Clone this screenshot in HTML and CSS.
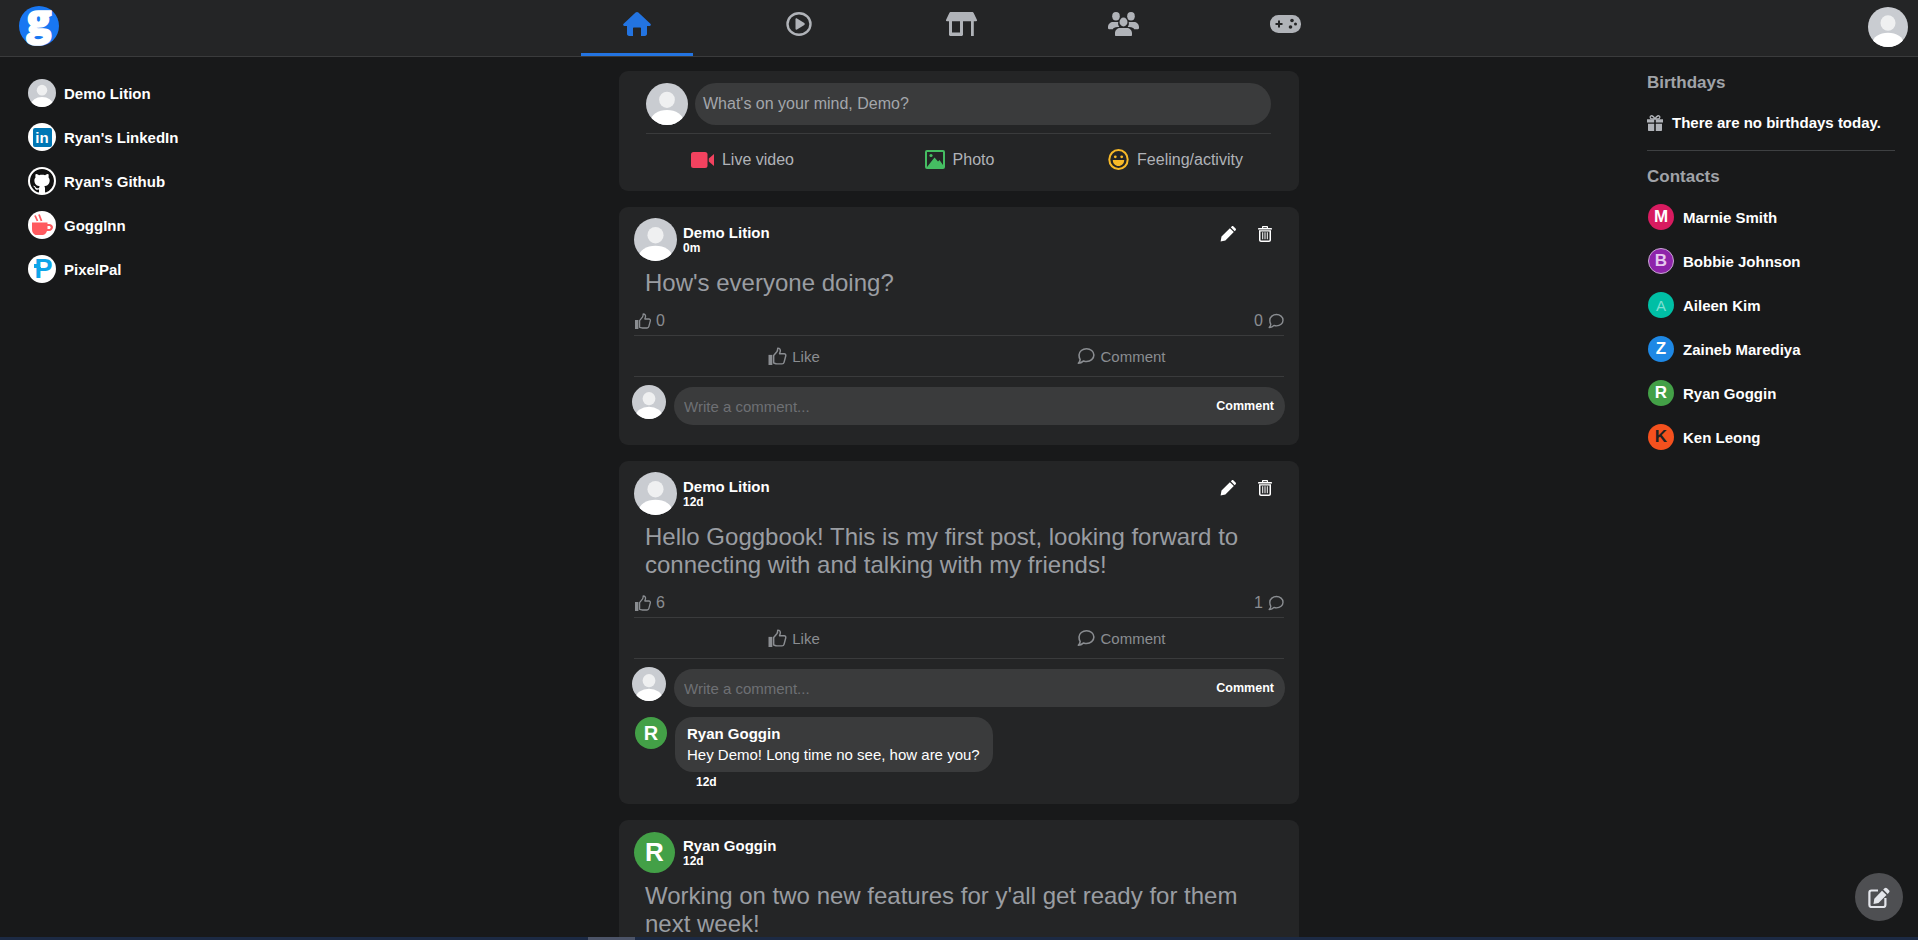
FILE: index.html
```html
<!DOCTYPE html>
<html lang="en">
<head>
    <meta charset="UTF-8">
    <meta name="viewport" content="width=device-width, initial-scale=1.0">
    <title>Goggbook</title>
    <link rel="stylesheet" href="styles.css">
</head>
<body>
    <svg class="icon-defs" aria-hidden="true">
        <symbol id="user" viewBox="0 0 40 40">
            <rect width="40" height="40" fill="#c9ccd1"/>
            <ellipse cx="20" cy="16" rx="7.500" ry="7.700" fill="#eff0f1"/>
            <ellipse cx="20" cy="36.200" rx="15.500" ry="10.500" fill="#fff"/>
        </symbol>
        <symbol id="thumb" viewBox="0 0 16 16">
            <path d="M0 7h3.400v9H0z" fill="currentColor"/>
            <path d="M4.600 7.600 7.400 4.200c.6-.8.8-1.700.8-3.200 1.800 0 2.700 1.300 2.200 3.100L9.800 6h4.100c1.100 0 1.700 1 1.400 2l-1.500 5.700c-.2.800-.8 1.300-1.700 1.300H7.400c-1.200 0-1.800-.7-2.800-.7z" fill="none" stroke="currentColor" stroke-width="1.300" stroke-linejoin="round"/>
        </symbol>
        <symbol id="bubble" viewBox="0 0 16 16">
            <path d="M8.500 1.500c3.500 0 6.500 2.400 6.500 5.700s-3 5.700-6.500 5.700c-.9 0-1.800-.2-2.600-.5C4.800 13.400 3.200 14.500 1.200 14.500c.9-1 1.500-2.100 1.600-3.300C2 10.200 1.800 8.800 1.800 7.200 1.800 3.900 5 1.500 8.500 1.500z" fill="none" stroke="currentColor" stroke-width="1.400" stroke-linejoin="round"/>
        </symbol>
        <symbol id="pencil" viewBox="0 0 16 16">
            <path fill="currentColor" d="M.6 15.400 1.500 10.600 9.900 2.200l3.900 3.900-8.400 8.400zM10.800 1.300 11.700.4c.5-.5 1.300-.5 1.800 0l2.100 2.100c.5.500.5 1.300 0 1.800l-.9.900z"/>
        </symbol>
        <symbol id="trash" viewBox="0 0 14 16">
            <path fill="currentColor" d="M5 0h4c.6 0 1 .4 1 1v1h3.300c.4 0 .7.300.7.700v.9H0v-.9c0-.4.300-.7.700-.7H4V1c0-.6.400-1 1-1zm.2 1.200V2h3.600v-.8zM1 4.200h12V14c0 1.100-.9 2-2 2H3c-1.100 0-2-.9-2-2zm1.500 1.200V14c0 .3.200.5.500.5h8c.3 0 .5-.2.500-.5V5.400zM4.200 6.200h1v7h-1zm2.300 0h1v7h-1zm2.300 0h1v7h-1z"/>
        </symbol>
    </svg>

    <header class="topbar">
        <div class="topbar-left">
            <a href="#" class="logo">
                <svg width="40" height="40" viewBox="0 0 40 40"><circle cx="20" cy="20" r="20" fill="#1877f2"/><text x="20" y="28.500" text-anchor="middle" class="logo-g">g</text></svg>
            </a>
        </div>
        <nav class="tabs">
            <a href="#" class="tab active">
                <svg width="28" height="24" viewBox="0 0 28 24"><path fill="currentColor" d="M12.600.6c.8-.8 2-.8 2.800 0l12 11.200c.9.900.4 2.200-.8 2.200H24v7.800c0 1.300-.9 2.200-2.200 2.200H18v-7.500c0-.6-.4-1-1-1h-6c-.6 0-1 .4-1 1V24H6.200C4.900 24 4 23.100 4 21.800V14H1.400C.2 14-.3 12.700.6 11.800z"/></svg>
            </a>
            <a href="#" class="tab">
                <svg width="26" height="24" viewBox="0 0 26 24"><ellipse cx="13" cy="12" rx="11.500" ry="10.800" fill="none" stroke="currentColor" stroke-width="2.400"/><path fill="currentColor" d="M9.500 7.300c0-.8.800-1.300 1.500-.9l7.300 4.600c.6.400.6 1.500 0 1.900L11 17.600c-.7.400-1.500-.1-1.500-.9z"/></svg>
            </a>
            <a href="#" class="tab">
                <svg width="31" height="24" viewBox="0 0 31 24"><path fill="currentColor" d="M5 0h21c.8 0 1.500.5 1.800 1.200L31 8c.3.700-.2 1.300-.9 1.300H.9C.2 9.300-.3 8.700 0 8l3.200-6.800C3.500.5 4.200 0 5 0zM3 9h3v11.500h8V9h3v13.500c0 .8-.7 1.500-1.500 1.500h-11C3.700 24 3 23.300 3 22.500zM25 9h2.800v15H25z"/></svg>
            </a>
            <a href="#" class="tab">
                <svg width="31" height="24" viewBox="0 0 31 24"><g fill="currentColor"><ellipse cx="8" cy="4.200" rx="3.800" ry="4.200"/><ellipse cx="23" cy="4.200" rx="3.800" ry="4.200"/><ellipse cx="15.500" cy="10" rx="4" ry="4.400"/><path d="M0 15c0-3 2.500-5 5-5h5.300c-.5 1.900 0 3.500 1 5H9.500C7 15 5.400 16 4.800 17.200H1C.4 17.200 0 16.600 0 16zM31 15c0-3-2.500-5-5-5h-5.300c.5 1.900 0 3.500-1 5h1.800c2.500 0 4.100 1 4.700 2.200H30c.6 0 1-.6 1-1.200zM7 21c0-3 2.600-5 5-5h7c2.400 0 5 2 5 5v2c0 .6-.4 1-1 1H8c-.6 0-1-.4-1-1z"/></g></svg>
            </a>
            <a href="#" class="tab">
                <svg width="31" height="18" viewBox="0 0 31 18"><rect width="31" height="18" rx="8.500" fill="currentColor"/><path fill="#242526" d="M8 5.500h2v2.500h2.500v2H10v2.500H8V10H5.500V8H8z"/><circle cx="22" cy="5.500" r="1.800" fill="#242526"/><circle cx="20.500" cy="12" r="1.800" fill="#242526"/><circle cx="25.500" cy="9" r="1.500" fill="#242526"/></svg>
            </a>
        </nav>
        <div class="topbar-right">
            <svg class="avatar avatar-40"><use href="#user"/></svg>
        </div>
    </header>

    <div class="page">
        <aside class="sidebar">
            <a href="#" class="side-link">
                <svg class="avatar avatar-28"><use href="#user"/></svg>
                <span>Demo Lition</span>
            </a>
            <a href="#" class="side-link">
                <span class="avatar avatar-28 badge-white"><span class="linkedin">in</span></span>
                <span>Ryan's LinkedIn</span>
            </a>
            <a href="#" class="side-link">
                <span class="avatar avatar-28 badge-white">
                    <svg width="24" height="24" viewBox="0 0 16 16"><path fill="#111" d="M8 0C3.580 0 0 3.580 0 8c0 3.540 2.290 6.530 5.470 7.590.4.070.55-.17.55-.38 0-.19-.01-.82-.01-1.490-2.010.37-2.530-.49-2.690-.94-.09-.23-.48-.94-.82-1.130-.28-.15-.68-.52-.01-.53.63-.01 1.080.58 1.230.82.72 1.210 1.870.87 2.330.66.07-.52.28-.87.51-1.070-1.780-.2-3.640-.89-3.640-3.950 0-.87.31-1.590.82-2.150-.08-.2-.36-1.020.08-2.120 0 0 .67-.21 2.200.82.64-.18 1.320-.27 2-.27.68 0 1.360.09 2 .27 1.530-1.040 2.200-.82 2.200-.82.44 1.100.16 1.920.08 2.120.51.56.82 1.270.82 2.150 0 3.070-1.870 3.750-3.650 3.950.29.25.54.73.54 1.480 0 1.070-.01 1.930-.01 2.200 0 .21.15.46.55.38A8.013 8.013 0 0016 8c0-4.420-3.580-8-8-8z"/></svg>
                </span>
                <span>Ryan's Github</span>
            </a>
            <a href="#" class="side-link">
                <span class="avatar avatar-28 badge-white">
                    <svg width="22" height="22" viewBox="0 0 22 22"><path fill="#ff5a5f" d="M1 8.500h15.500V10H18c2.400 0 4 1.500 4 3.300S20.400 17 18 17h-2c-1 2.500-2.500 4-4.500 4h-6C3 21 1 18.500 1 15zm15.500 3.500v3H18c1 0 1.700-.6 1.700-1.500S19 12 18 12z"/><path d="M4 1.500 6.500 7M8 .5l2.500 6.500" stroke="#ff5a5f" stroke-width="1.800" fill="none"/></svg>
                </span>
                <span>GoggInn</span>
            </a>
            <a href="#" class="side-link">
                <span class="avatar avatar-28 badge-white">
                    <span class="pixel-p">P</span>
                    <span class="pixel-dot"></span>
                </span>
                <span>PixelPal</span>
            </a>
        </aside>

        <main class="feed">
            <section class="card composer">
                <div class="composer-top">
                    <svg class="avatar composer-avatar"><use href="#user"/></svg>
                    <div class="composer-input">What's on your mind, Demo?</div>
                </div>
                <div class="composer-actions">
                    <a href="#" class="composer-action">
                        <svg width="23" height="16" viewBox="0 0 23 16"><rect width="16.500" height="16" rx="2.500" fill="#f3425f"/><path fill="#f3425f" d="M17.800 6.500 23 2v12l-5.200-4.500z"/></svg>
                        Live video
                    </a>
                    <a href="#" class="composer-action">
                        <svg width="20" height="19" viewBox="0 0 20 19"><rect x="1" y="1" width="18" height="17" rx="1" fill="none" stroke="#45bd62" stroke-width="2"/><path fill="#45bd62" d="M2 17 9.500 7.500l3.500 4 1.500-1.500L18 15v2z"/><circle cx="6" cy="5.500" r="1.600" fill="#45bd62"/></svg>
                        Photo
                    </a>
                    <a href="#" class="composer-action">
                        <svg width="21" height="21" viewBox="0 0 21 21"><ellipse cx="10.500" cy="10.500" rx="9.200" ry="9.500" fill="none" stroke="#f7b928" stroke-width="2"/><circle cx="7.300" cy="7.800" r="1.400" fill="#f7b928"/><circle cx="13.700" cy="7.800" r="1.400" fill="#f7b928"/><path fill="#f7b928" d="M4.800 11h11.400c0 3.500-2.400 6-5.700 6s-5.700-2.500-5.700-6z"/></svg>
                        Feeling/activity
                    </a>
                </div>
            </section>

            <article class="card post">
                <div class="post-head">
                    <svg class="avatar avatar-post"><use href="#user"/></svg>
                    <div class="post-meta">
                        <div class="post-name">Demo Lition</div>
                        <div class="post-time">0m</div>
                    </div>
                    <div class="post-tools">
                        <svg width="16" height="16"><use href="#pencil"/></svg>
                        <svg width="14" height="16"><use href="#trash"/></svg>
                    </div>
                </div>
                <p class="post-text">How's everyone doing?</p>
                <div class="post-stats">
                    <span class="stat"><svg width="16" height="16"><use href="#thumb"/></svg>0</span>
                    <span class="stat">0<svg width="16" height="16"><use href="#bubble"/></svg></span>
                </div>
                <div class="post-actions">
                    <a href="#" class="post-action"><svg width="19" height="18"><use href="#thumb"/></svg>Like</a>
                    <a href="#" class="post-action"><svg width="18" height="18"><use href="#bubble"/></svg>Comment</a>
                </div>
                <div class="comment-form">
                    <svg class="avatar comment-avatar"><use href="#user"/></svg>
                    <div class="comment-box">
                        <input type="text" placeholder="Write a comment...">
                        <button type="button">Comment</button>
                    </div>
                </div>
            </article>

            <article class="card post">
                <div class="post-head">
                    <svg class="avatar avatar-post"><use href="#user"/></svg>
                    <div class="post-meta">
                        <div class="post-name">Demo Lition</div>
                        <div class="post-time">12d</div>
                    </div>
                    <div class="post-tools">
                        <svg width="16" height="16"><use href="#pencil"/></svg>
                        <svg width="14" height="16"><use href="#trash"/></svg>
                    </div>
                </div>
                <p class="post-text">Hello Goggbook! This is my first post, looking forward to connecting with and talking with my friends!</p>
                <div class="post-stats">
                    <span class="stat"><svg width="16" height="16"><use href="#thumb"/></svg>6</span>
                    <span class="stat">1<svg width="16" height="16"><use href="#bubble"/></svg></span>
                </div>
                <div class="post-actions">
                    <a href="#" class="post-action"><svg width="19" height="18"><use href="#thumb"/></svg>Like</a>
                    <a href="#" class="post-action"><svg width="18" height="18"><use href="#bubble"/></svg>Comment</a>
                </div>
                <div class="comment-form">
                    <svg class="avatar comment-avatar"><use href="#user"/></svg>
                    <div class="comment-box">
                        <input type="text" placeholder="Write a comment...">
                        <button type="button">Comment</button>
                    </div>
                </div>
                <div class="comment">
                    <span class="letter letter-comment green">R</span>
                    <div>
                        <div class="comment-bubble">
                            <div class="comment-name">Ryan Goggin</div>
                            <div class="comment-text">Hey Demo! Long time no see, how are you?</div>
                        </div>
                        <div class="comment-time">12d</div>
                    </div>
                </div>
            </article>

            <article class="card post">
                <div class="post-head">
                    <span class="letter letter-post green">R</span>
                    <div class="post-meta">
                        <div class="post-name">Ryan Goggin</div>
                        <div class="post-time">12d</div>
                    </div>
                </div>
                <p class="post-text">Working on two new features for y'all get ready for them next week!</p>
            </article>
        </main>

        <aside class="rightbar">
            <h2>Birthdays</h2>
            <div class="birthday">
                <svg width="16" height="16" viewBox="0 0 16 16"><path fill="#b0b3b8" d="M0 4.200h7.200v3.300H0zM8.800 4.200H16v3.300H8.800zM1 8.700h6.200V16H2c-.6 0-1-.4-1-1zM8.800 8.700H15V15c0 .6-.4 1-1 1H8.800z"/><path fill="none" stroke="#b0b3b8" stroke-width="1.300" d="M8 4C6.500 1 5 .6 4 .8 2.800 1.100 2.800 3.500 4.500 3.800zM8 4c1.500-3 3-3.400 4-3.200 1.200.3 1.200 2.700-.5 3z"/></svg>
                <span>There are no birthdays today.</span>
            </div>
            <hr>
            <h2>Contacts</h2>
            <ul class="contacts">
                <li><span class="letter letter-contact pink">M</span>Marnie Smith</li>
                <li><span class="letter letter-contact purple">B</span>Bobbie Johnson</li>
                <li><span class="letter letter-contact teal">A</span>Aileen Kim</li>
                <li><span class="letter letter-contact blue">Z</span>Zaineb Marediya</li>
                <li><span class="letter letter-contact green">R</span>Ryan Goggin</li>
                <li><span class="letter letter-contact orange">K</span>Ken Leong</li>
            </ul>
        </aside>
    </div>

    <a href="#" class="fab">
        <svg width="22" height="21" viewBox="0 0 22 21"><path fill="none" stroke="#e4e6eb" stroke-width="2.200" d="M10 3.500H3.500c-1.200 0-2.100.9-2.100 2.100v12.300c0 1.200.9 2.100 2.100 2.100h11.800c1.200 0 2.100-.9 2.100-2.100V11"/><path fill="#e4e6eb" d="M16.500 1.300c.7-.8 1.800-.8 2.500-.1l2 2c.7.700.7 1.700 0 2.400l-1.300 1.300-4.500-4.400zM14 3.700l4.500 4.400-8 8-5 .8.800-5.100z"/></svg>
    </a>
    <div class="scroll-strip"><div class="scroll-thumb"></div></div>
</body>
</html>
```

FILE: styles.css
```css
* {
    margin: 0;
    padding: 0;
    box-sizing: border-box;
    font-family: "Liberation Sans", Arial, sans-serif;
}

html, body {
    height: 100%;
    overflow: hidden;
}

body {
    background: #18191a;
    color: #fff;
}

a {
    color: inherit;
    text-decoration: none;
}

.icon-defs {
    position: absolute;
    width: 0;
    height: 0;
}

.avatar {
    display: block;
    flex-shrink: 0;
    border-radius: 50%;
    overflow: hidden;
}

.avatar-28 {
    width: 28px;
    height: 28px;
}

.avatar-40 {
    width: 40px;
    height: 40px;
}

/* top bar */
.topbar {
    height: 57px;
    background: #242526;
    border-bottom: 1px solid #3a3b3c;
    display: grid;
    grid-template-columns: 581px 760px 1fr;
}

.topbar-left {
    padding: 6px 0 0 19px;
}

.logo {
    display: block;
    width: 40px;
    height: 40px;
}

.logo-g {
    fill: #fff;
    stroke: #fff;
    stroke-width: 1.500px;
    font-family: "Open Sans", sans-serif;
    font-weight: 800;
    font-size: 42px;
}

.tabs {
    display: flex;
    gap: 50px;
}

.tab {
    width: 112px;
    height: 56px;
    display: flex;
    align-items: center;
    justify-content: center;
    padding-bottom: 6px;
    color: #b0b3b8;
    border-bottom: 3px solid transparent;
}

.tab.active {
    color: #2374e1;
    border-bottom-color: #2374e1;
}

.topbar-right {
    display: flex;
    justify-content: flex-end;
    padding: 7px 10px 0 0;
}

/* page columns */
.page {
    display: grid;
    grid-template-columns: 619px 680px 1fr;
}

.sidebar {
    padding: 22px 0 0 28px;
    display: flex;
    flex-direction: column;
    gap: 16px;
}

.side-link {
    display: flex;
    align-items: center;
    gap: 8px;
    height: 28px;
    font-size: 15px;
    font-weight: bold;
}

.badge-white {
    position: relative;
    background: #fff;
    display: flex;
    align-items: center;
    justify-content: center;
}

.linkedin {
    width: 19px;
    height: 19px;
    border-radius: 2px;
    background: #0077b5;
    color: #fff;
    font-size: 15px;
    font-weight: bold;
    line-height: 20px;
    text-align: center;
}

.pixel-p {
    color: #0ea5e9;
    font-size: 27px;
    font-weight: bold;
    line-height: 28px;
    margin-left: 3px;
}

.pixel-dot {
    position: absolute;
    left: 6px;
    top: 9px;
    width: 4px;
    height: 4px;
    background: #0ea5e9;
    box-shadow: 3px 3px 0 #0ea5e9;
}

/* feed */
.feed {
    padding-top: 14px;
    display: flex;
    flex-direction: column;
    gap: 16px;
}

.card {
    background: #242526;
    border-radius: 9px;
}

.composer {
    height: 120px;
    padding: 12px 28px 0 27px;
}

.composer-top {
    display: flex;
    gap: 7px;
    padding-bottom: 8px;
    border-bottom: 1px solid #3a3b3c;
}

.composer-avatar {
    width: 42px;
    height: 42px;
}

.composer-input {
    flex: 1;
    height: 42px;
    border-radius: 21px;
    background: #3a3b3c;
    color: #a3a6ab;
    font-size: 16px;
    line-height: 42px;
    padding-left: 8px;
}

.composer-actions {
    display: grid;
    grid-template-columns: 193px 1fr 191px;
    height: 51px;
    align-items: center;
}

.composer-action {
    display: flex;
    align-items: center;
    justify-content: center;
    gap: 8px;
    color: #b0b3b8;
    font-size: 16px;
}

.post {
    padding: 11px 15px 20px;
}

.post-head {
    display: flex;
    align-items: center;
    height: 43px;
}

.avatar-post {
    width: 43px;
    height: 43px;
}

.post-meta {
    margin-left: 6px;
    flex: 1;
}

.post-name {
    font-size: 15px;
    font-weight: bold;
    line-height: 17px;
}

.post-time {
    font-size: 12px;
    font-weight: bold;
    line-height: 15px;
}

.post-tools {
    display: flex;
    align-items: center;
    gap: 22px;
    padding: 0 12px 12px 0;
}

.post-text {
    margin-top: 8px;
    padding-left: 11px;
    color: #9a9da2;
    font-size: 24px;
    line-height: 28px;
    max-width: 640px;
}

.post-stats {
    display: flex;
    justify-content: space-between;
    height: 18px;
    margin-top: 15px;
    margin-bottom: 5px;
    padding-left: 1px;
}

.stat {
    display: flex;
    align-items: center;
    gap: 5px;
    color: #8a8d91;
    font-size: 16px;
}

.post-actions {
    display: grid;
    grid-template-columns: 1fr 1fr;
    height: 42px;
    border-top: 1px solid #3a3b3c;
    border-bottom: 1px solid #3a3b3c;
}

.post-action {
    display: flex;
    align-items: center;
    justify-content: center;
    gap: 5px;
    color: #8a8d91;
    font-size: 15px;
}

.post-action:first-child {
    padding-right: 5px;
}

.comment-form {
    display: flex;
    gap: 8px;
    margin: 10px -1px 0 -2px;
}

.comment-avatar {
    width: 34px;
    height: 34px;
    margin-top: -2px;
}

.comment-box {
    flex: 1;
    display: flex;
    align-items: center;
    height: 38px;
    border-radius: 19px;
    background: #3a3b3c;
    padding: 0 11px 0 10px;
}

.comment-box input {
    flex: 1;
    background: none;
    border: none;
    outline: none;
    color: #fff;
    font-size: 15px;
}

.comment-box input::placeholder {
    color: #6e7074;
    opacity: 1;
}

.comment-box button {
    background: none;
    border: none;
    color: #fff;
    font-size: 12.500px;
    font-weight: bold;
}

.letter {
    display: flex;
    align-items: center;
    justify-content: center;
    flex-shrink: 0;
    border-radius: 50%;
    font-weight: bold;
}

.letter-post {
    width: 41px;
    height: 41px;
    font-size: 26px;
    margin-right: 2px;
}

.letter-comment {
    width: 32px;
    height: 32px;
    font-size: 20px;
}

.letter-contact {
    width: 26px;
    height: 26px;
    font-size: 17px;
    margin-right: 9px;
}

.green { background: #43a047; color: #fff; }
.pink { background: #d81b60; color: #fff; }
.purple { background: #8e24aa; color: #e6c8ef; border: 1px solid #c9a8d4; }
.teal { background: #00bfa5; color: #7fdfd2; font-weight: normal; font-size: 15px; }
.blue { background: #1e88e5; color: #fff; }
.orange { background: #f4511e; color: #212121; }

.comment {
    display: flex;
    gap: 8px;
    margin: 10px 0 -5px 1px;
}

.comment-bubble {
    background: #3a3b3c;
    border-radius: 18px;
    padding: 8px 13px 8px 12px;
    height: 55px;
}

.comment-name {
    font-size: 15px;
    font-weight: bold;
    line-height: 18px;
}

.comment-text {
    font-size: 15px;
    line-height: 20px;
    margin-top: 2px;
}

.comment-time {
    margin: 3px 0 0 21px;
    font-size: 12px;
    font-weight: bold;
}

/* right column */
.rightbar {
    padding: 16px 23px 0 348px;
}

.rightbar h2 {
    color: #a0a3a8;
    font-size: 17px;
    line-height: 20px;
}

.birthday {
    display: flex;
    align-items: center;
    gap: 9px;
    margin-top: 21px;
    font-size: 15px;
    font-weight: bold;
}

hr {
    border: none;
    border-top: 1px solid #3e4042;
    margin: 19px 0 16px;
}

.contacts {
    list-style: none;
    margin-top: 17px;
    padding-left: 1px;
}

.contacts li {
    display: flex;
    align-items: center;
    height: 26px;
    margin-bottom: 18px;
    font-size: 15px;
    font-weight: bold;
}

.fab {
    position: fixed;
    right: 15px;
    bottom: 19px;
    width: 48px;
    height: 48px;
    border-radius: 50%;
    background: #4e4f52;
    display: flex;
    align-items: center;
    justify-content: center;
}

.scroll-strip {
    position: fixed;
    left: 0;
    right: 0;
    bottom: 0;
    height: 3px;
    background: #1c2a44;
}

.scroll-thumb {
    margin-left: 588px;
    width: 47px;
    height: 3px;
    background: #4c5468;
}
```
